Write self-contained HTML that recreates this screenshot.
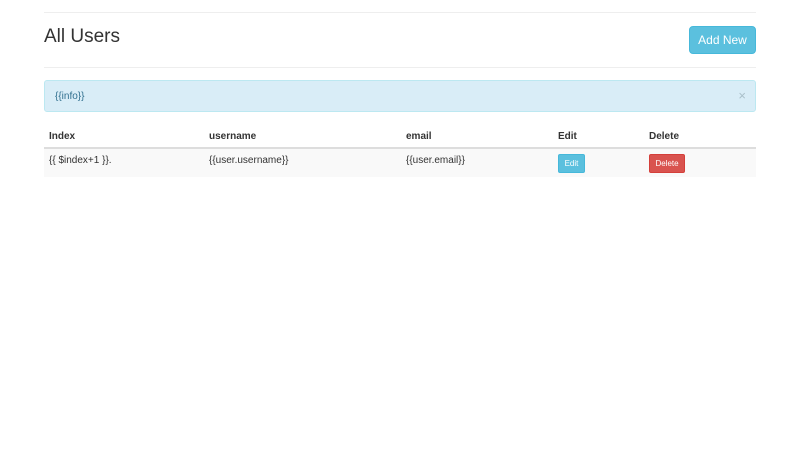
<!DOCTYPE html>
<html><head><style>
body{margin:0;font-family:"Liberation Sans",sans-serif;color:#333;background:#fff;font-size:10px}
.hr{position:absolute;left:44px;width:712px;height:1px;background:#eee}
h1{position:absolute;left:44px;top:26px;margin:0;font-size:19px;font-weight:normal;color:#333}
.add{position:absolute;left:689px;top:26px;width:67px;height:28px;box-sizing:border-box;background:#5bc0de;border:1px solid #46b8da;border-radius:4px;color:#fff;font-size:12px;line-height:27px;text-align:center}
.alert{position:absolute;left:44px;top:80px;width:712px;height:32px;box-sizing:border-box;background:#d9edf7;border:1px solid #bce8f1;border-radius:3px;color:#31708f;padding:0 10px;line-height:31px}
.x{position:absolute;right:9px;top:-1px;color:#aac0ca;font-size:13px}
table{position:absolute;left:44px;top:125px;width:712px;border-collapse:collapse}
th{text-align:left;font-weight:bold;padding:0 5px;height:22px;border-bottom:2px solid #ddd;font-size:10px}
td{padding:0 5px;height:29px;background:#f9f9f9;vertical-align:top;padding-top:6px;box-sizing:border-box;font-size:10px}
.b{display:inline-block;color:#fff;font-size:8px;border-radius:2px;height:19px;line-height:18px;box-sizing:border-box;text-align:center;margin-top:-1px}
</style></head><body>
<div class="hr" style="top:12px"></div>
<h1>All Users</h1>
<div class="add">Add New</div>
<div class="hr" style="top:67px"></div>
<div class="alert">{{info}}<span class="x">×</span></div>
<table>
<tr><th style="width:150px">Index</th><th style="width:187px">username</th><th style="width:142px">email</th><th style="width:81px">Edit</th><th>Delete</th></tr>
<tr><td>{{ $index+1 }}.</td><td>{{user.username}}</td><td>{{user.email}}</td>
<td><span class="b" style="background:#5bc0de;border:1px solid #46b8da;width:27px">Edit</span></td>
<td><span class="b" style="background:#d9534f;border:1px solid #d43f3a;width:36px">Delete</span></td></tr>
</table>
</body></html>
